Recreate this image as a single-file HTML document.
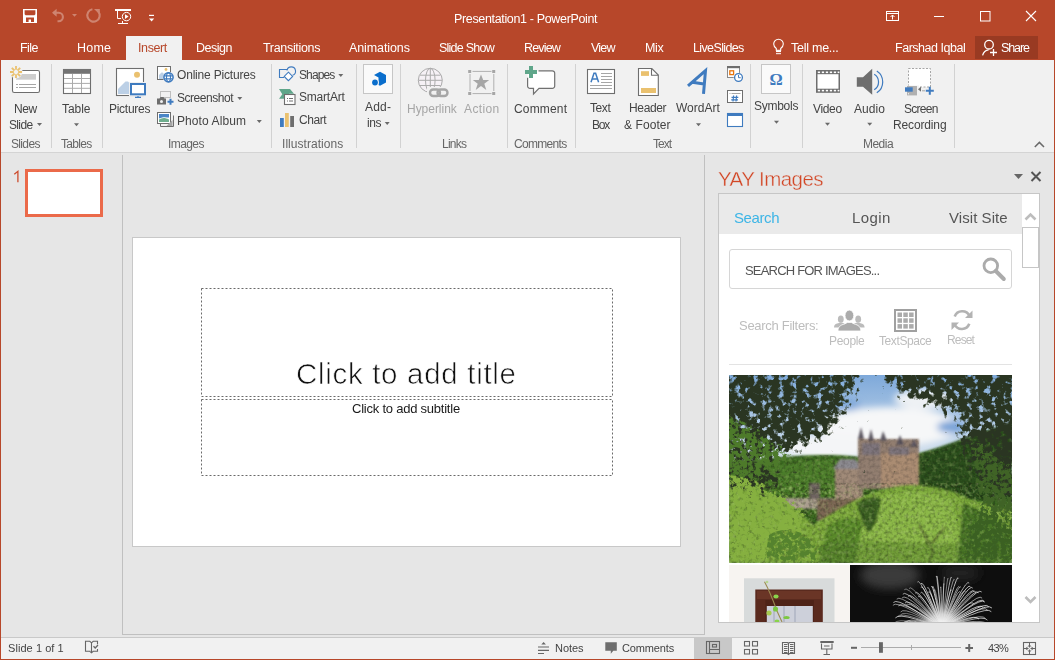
<!DOCTYPE html>
<html><head><meta charset="utf-8">
<style>
html,body{margin:0;padding:0;}
body{width:1055px;height:660px;overflow:hidden;position:relative;background:#E6E6E6;font-family:"Liberation Sans",sans-serif;}
.a{position:absolute;}
.t{position:absolute;white-space:pre;font-family:"Liberation Sans",sans-serif;will-change:transform;}
svg{position:absolute;overflow:visible;}
</style></head><body>
<!-- title + tabs -->
<div class="a" style="left:0;top:0;width:1055px;height:60px;background:#B7472A"></div>
<div class="a" style="left:126px;top:36px;width:56px;height:24px;background:#F1F1F1"></div>
<div class="a" style="left:975px;top:36px;width:63px;height:23px;background:#993A22"></div>
<!-- ribbon -->
<div class="a" style="left:0;top:60px;width:1055px;height:92px;background:#F1F1F1"></div>
<div class="a" style="left:0;top:152px;width:1055px;height:1px;background:#D4D4D4"></div>
<!-- ribbon separators -->
<div class="a" style="left:51px;top:64px;width:1px;height:84px;background:#D2D2D2"></div>
<div class="a" style="left:102px;top:64px;width:1px;height:84px;background:#D2D2D2"></div>
<div class="a" style="left:271px;top:64px;width:1px;height:84px;background:#D2D2D2"></div>
<div class="a" style="left:356px;top:64px;width:1px;height:84px;background:#D2D2D2"></div>
<div class="a" style="left:400px;top:64px;width:1px;height:84px;background:#D2D2D2"></div>
<div class="a" style="left:507px;top:64px;width:1px;height:84px;background:#D2D2D2"></div>
<div class="a" style="left:575px;top:64px;width:1px;height:84px;background:#D2D2D2"></div>
<div class="a" style="left:750px;top:64px;width:1px;height:84px;background:#D2D2D2"></div>
<div class="a" style="left:802px;top:64px;width:1px;height:84px;background:#D2D2D2"></div>
<div class="a" style="left:954px;top:64px;width:1px;height:84px;background:#D2D2D2"></div>
<!-- main area -->
<div class="a" style="left:122px;top:155px;width:1px;height:480px;background:#C0C0C0"></div>
<div class="a" style="left:704px;top:155px;width:1px;height:480px;background:#C0C0C0"></div>
<div class="a" style="left:123px;top:634px;width:581px;height:1px;background:#C0C0C0"></div>
<!-- thumbnail -->
<div class="a" style="left:25px;top:169px;width:72px;height:42px;border:3px solid #EB6A4A;background:#fff"></div>
<!-- slide -->
<div class="a" style="left:132px;top:237px;width:547px;height:308px;border:1px solid #C8C8C8;background:#fff"></div>
<svg class="a" style="left:0;top:0" width="1055" height="660"><g fill="none" stroke="#6A6A6A" stroke-width="1" stroke-dasharray="2 2"><rect x="201.5" y="288.5" width="411" height="108"/><rect x="201.5" y="399.5" width="411" height="76"/></g></svg>

<!-- task pane -->
<div class="a" style="left:718px;top:193px;width:320px;height:428px;border:1px solid #C6C6C6;background:#fff"></div>
<div class="a" style="left:719px;top:194px;width:303px;height:40px;background:#EAEAEA"></div>
<div class="a" style="left:729px;top:249px;width:281px;height:38px;border:1px solid #D6D6D6;border-radius:3px;background:#fff"></div>
<div class="a" style="left:729px;top:364px;width:283px;height:1px;background:#E3E3E3"></div>
<div class="a" style="left:1022px;top:227px;width:15px;height:39px;border:1px solid #C6C6C6;background:#fff"></div>
<!-- images -->
<div class="a" style="left:729px;top:375px;width:283px;height:188px;background:#6a8a40"></div>
<div class="a" style="left:729px;top:565px;width:121px;height:57px;background:#F4F1EC"></div>
<div class="a" style="left:850px;top:565px;width:162px;height:57px;background:#141414"></div>
<!-- status bar -->
<div class="a" style="left:0;top:637px;width:1055px;height:22px;background:#F1F1F1;border-top:1px solid #C9C9C9"></div>
<div class="a" style="left:694px;top:638px;width:38px;height:21px;background:#C8C8C8"></div>
<svg class="a" style="left:0;top:0" width="1055" height="660" viewBox="0 0 1055 660">
<!-- save -->
<path d="M23 9h14v14h-14z M24.6 10.3v4l1 1h8.8l1-1v-4z M26 17.6v4.4h2.6v-2.4h2.4v2.4h3v-4.4z" fill="#fff" fill-rule="evenodd"/>
<!-- undo -->
<g opacity="0.33">
<path d="M53.5 12.8h5.2a4.2 4.2 0 0 1 0 8.4h-1.2" fill="none" stroke="#fff" stroke-width="2.1"/>
<path d="M52 12.8l4.6-4v8z" fill="#fff"/>
<path d="M72 14h5l-2.5 2.8z" fill="#fff"/>
<path d="M92.4 9.3A6.2 6.2 0 1 0 98.4 11.6" fill="none" stroke="#fff" stroke-width="2.1"/>
<path d="M94 9h5.8v5.5z" fill="#fff"/>
</g>
<!-- presenter -->
<g stroke="#fff" fill="none">
<path d="M115 10h16" stroke-width="2"/>
<path d="M117.5 11v7.5h3.5" stroke-width="1"/>
<circle cx="126.5" cy="16.6" r="4.2" stroke-width="1"/>
<path d="M118 23.5h10M122.5 21v2.5" stroke-width="1"/>
</g>
<path d="M125 14.3v4.6l3.6-2.3z" fill="#fff"/>
<!-- customize -->
<path d="M149 15.4h5" stroke="#fff" stroke-width="1.2"/>
<path d="M149 18.6h5.2l-2.6 2.8z" fill="#fff"/>
<!-- window controls -->
<g stroke="#fff" fill="none" stroke-width="1">
<rect x="886.5" y="11.5" width="12" height="9"/>
<path d="M886.5 13.5h12M892.5 19.5v-4.5M890.5 17l2-2l2 2"/>
<path d="M934 16.5h10"/>
<rect x="980.5" y="11.5" width="9.5" height="9.5"/>
<path d="M1026 11l10 10M1036 11l-10 10" stroke-width="1.1"/>
</g>
<!-- bulb -->
<g stroke="#fff" fill="none" stroke-width="1.1">
<path d="M776.3 50.3v-1.8c-1.5-1.2-2.6-2.6-2.6-4.5a4.8 4.8 0 0 1 9.6 0c0 1.9-1.1 3.3-2.6 4.5v1.8z"/>
</g>
<rect x="776" y="50.3" width="5" height="1.8" fill="#fff"/>
<path d="M776 53.7h5" stroke="#fff" stroke-width="1"/>
<!-- share person -->
<g stroke="#fff" fill="none" stroke-width="1.3">
<circle cx="989" cy="44.7" r="4.3"/>
<path d="M982.6 55.3c0.8-3 3-5.3 6-5.5"/>
<path d="M990 52.5h7M993.5 49v7"/>
</g>
</svg>

<svg class="a" style="left:0;top:0" width="1055" height="660" viewBox="0 0 1055 660">
<defs>
<path id="dd" d="M0 0h5l-2.5 3z" fill="#6A6A6A"/>
</defs>
<!-- dropdown arrows -->
<use href="#dd" x="37" y="123"/>
<use href="#dd" x="74" y="123.3"/>
<use href="#dd" x="237.3" y="97"/>
<use href="#dd" x="256.8" y="120"/>
<use href="#dd" x="338.3" y="74"/>
<use href="#dd" x="384.7" y="122"/>
<use href="#dd" x="696" y="123.3"/>
<use href="#dd" x="774" y="120.8"/>
<use href="#dd" x="825" y="122.8"/>
<use href="#dd" x="867.2" y="122.8"/>
<!-- collapse caret -->
<path d="M1034.8 147l4.6-4.6l4.6 4.6" stroke="#6A6A6A" stroke-width="1.5" fill="none"/>

<!-- New Slide -->
<rect x="12.5" y="70.5" width="27" height="22" rx="1.8" fill="#fff" stroke="#6E6E6E" stroke-width="1.1"/>
<rect x="16" y="74" width="20" height="5.7" fill="#CDCDCD"/>
<path d="M16 84.5h2M19 84.5h17M16 87.5h2M19 87.5h17" stroke="#A6A6A6" stroke-width="1"/>
<circle cx="16" cy="72" r="6.5" fill="#F1F1F1"/>
<g stroke="#EAC16F" stroke-width="1.8" stroke-linecap="butt">
<path d="M16 66v3.8M16 74.2v3.8M10 72h3.8M18.2 72h3.8M11.8 67.8l2.7 2.7M17.5 73.5l2.7 2.7M11.8 76.2l2.7-2.7M17.5 70.5l2.7-2.7"/>
</g>

<!-- Table -->
<rect x="63.5" y="69.5" width="27" height="24" fill="#fff" stroke="#6E6E6E" stroke-width="1.1"/>
<rect x="63" y="69" width="28" height="4.8" fill="#737373"/>
<path d="M72.5 74v19M81.5 74v19M64 78.5h26M64 83.4h26M64 88.3h26" stroke="#ABABAB" stroke-width="1"/>

<!-- Pictures -->
<rect x="116.5" y="68.5" width="27" height="27" fill="#fff" stroke="#6E6E6E" stroke-width="1.1"/>
<circle cx="137" cy="74.8" r="3" fill="#EAC16F"/>
<path d="M118 94v-5l7.5-7.5h2.5l2 2v10.5z" fill="#BCD0E6"/>
<rect x="129" y="82" width="18" height="14" fill="#F1F1F1"/>
<rect x="131" y="84" width="14" height="10.3" fill="#fff" stroke="#3F7BBF" stroke-width="2"/>
<path d="M135 97.3h6M138 96v1.3" stroke="#3F7BBF" stroke-width="1.2"/>

<!-- Online Pictures -->
<rect x="157.5" y="66.5" width="13" height="13" fill="#fff" stroke="#6E6E6E" stroke-width="1"/>
<circle cx="166" cy="69.5" r="1.4" fill="#EAC16F"/>
<path d="M159 79v-4l2.5-2.5h1l2 2v4.5z" fill="#BCD0E6"/>
<circle cx="168.5" cy="77.3" r="5.6" fill="#F1F1F1"/>
<circle cx="168.5" cy="77.3" r="4.6" fill="#fff" stroke="#3F7BBF" stroke-width="1.6"/>
<path d="M164.5 75.8h8M164.5 78.8h8" stroke="#3F7BBF" stroke-width="1.2"/>
<ellipse cx="168.5" cy="77.3" rx="2" ry="4.4" fill="none" stroke="#3F7BBF" stroke-width="1.1"/>

<!-- Screenshot -->
<rect x="160.5" y="91.5" width="10" height="6" fill="none" stroke="#8A8A8A" stroke-width="1" stroke-dasharray="1 1"/>
<path d="M157 98.5h2.5l1-1.5h3l1 1.5h1.5v6h-9z" fill="#6E6E6E"/>
<circle cx="161.5" cy="101.5" r="1.5" fill="#F1F1F1"/>
<path d="M167.5 101.8h6M170.5 98.8v6" stroke="#3F7BBF" stroke-width="2"/>

<!-- Photo Album -->
<path d="M160.5 115.5v11h13v-11" fill="none" stroke="#6E6E6E" stroke-width="1"/>
<rect x="157.5" y="112.5" width="13" height="11" fill="#fff" stroke="#6E6E6E" stroke-width="1"/>
<path d="M159 114h10v3.5c-3 0 -5 -1 -10 1z" fill="#4B86C6"/>
<path d="M159 122v-2.5c3-2 6-2 10 0v2.5z" fill="#6FAE8E"/>
<path d="M166.5 126l6-6v6z" fill="#A6A6A6"/>

<!-- Shapes -->
<path d="M284 77.5h-4.5v-8h8" fill="none" stroke="#3F7BBF" stroke-width="1.1"/>
<path d="M287 70.5a4.3 4.3 0 1 1 5.6 4.8" fill="none" stroke="#3F7BBF" stroke-width="1.1"/>
<path d="M288.4 72.2l4.2 4.2l-4.2 4.2l-4.2-4.2z" fill="#fff" stroke="#3F7BBF" stroke-width="1.1"/>

<!-- SmartArt -->
<path d="M279 89h11l4 4.8h-5v5h-10l3.3-4.5z" fill="#5FA68A"/>
<rect x="284.5" y="94.5" width="10.5" height="10" fill="#fff" stroke="#6E6E6E" stroke-width="1.1"/>
<path d="M287 98.5h1M289 98.5h4M287 101h1M289 101h4" stroke="#6E6E6E" stroke-width="1"/>

<!-- Chart -->
<rect x="280" y="118" width="3.8" height="9" fill="#3F7BBF"/>
<rect x="285" y="113" width="3.8" height="14" fill="#EAC16F"/>
<rect x="290.2" y="116" width="3.8" height="11" fill="#6E6E6E"/>

<!-- Add-ins -->
<rect x="363.5" y="64.5" width="29" height="29" fill="#FAFAFA" stroke="#C6C6C6" stroke-width="1"/>
<path d="M374 75l6-3.3l6 3.3v7.5l-6 3.3l-1.5-0.8v-7.5l-4.5-2.4z" fill="#0A6ECC"/>
<circle cx="375" cy="82.5" r="3.8" fill="#FAFAFA"/>
<circle cx="375" cy="82.5" r="2.9" fill="#0A6ECC"/>

<!-- Hyperlink -->
<circle cx="430.3" cy="80.3" r="12" fill="#F6F1F6" stroke="#ABABAB" stroke-width="1"/>
<ellipse cx="430.3" cy="80.3" rx="4.8" ry="12" fill="none" stroke="#ABABAB" stroke-width="1"/>
<path d="M418.5 80.3h23.6M420 75.2h20.6M420 85.5h20.6M430.3 68.3v24" stroke="#ABABAB" stroke-width="1"/>
<rect x="427" y="87" width="24" height="12" fill="#F1F1F1"/>
<rect x="430" y="89.5" width="10" height="6.5" rx="3.2" fill="none" stroke="#A6A6A6" stroke-width="2.4"/>
<rect x="437.5" y="89.5" width="10" height="6.5" rx="3.2" fill="none" stroke="#A6A6A6" stroke-width="2.4"/>

<!-- Action -->
<path d="M470 74v17M493.8 74v17M472.5 71.4h19M472.5 93.6h19" stroke="#B0B0B0" stroke-width="1"/>
<rect x="468.2" y="70" width="3" height="3" fill="#A6A6A6"/>
<rect x="492.2" y="70" width="3" height="3" fill="#A6A6A6"/>
<rect x="468.2" y="92" width="3" height="3" fill="#A6A6A6"/>
<rect x="492.2" y="92" width="3" height="3" fill="#A6A6A6"/>
<path d="M481 74.5l2.2 5.6h6l-4.9 3.6l2 6.2l-5.3-3.8l-5.3 3.8l2-6.2l-4.9-3.6h6z" fill="#A6A6A6"/>

<!-- Comment -->
<path d="M530.5 70.8h21.8a2.4 2.4 0 0 1 2.4 2.4v12.8a2.4 2.4 0 0 1 -2.4 2.4h-13.3l-5.5 5.6v-5.6h-3.5a2.4 2.4 0 0 1 -2.4 -2.4v-12.8a2.4 2.4 0 0 1 2.4 -2.4z" fill="#fff"/>
<path d="M538.5 70.8h13.8a2.4 2.4 0 0 1 2.4 2.4v12.8a2.4 2.4 0 0 1 -2.4 2.4h-13.3l-5.5 5.6v-5.6h-3.5a2.4 2.4 0 0 1 -2.4 -2.4v-8.2" fill="none" stroke="#707070" stroke-width="1.2"/>
<path d="M525 72h12M531 66v12" stroke="#5FA68A" stroke-width="4"/>
<!-- Text Box -->
<rect x="587.5" y="69.5" width="27" height="24" fill="#fff" stroke="#6E6E6E" stroke-width="1.1"/>
<path d="M591 82.2l3-9h1.6l3 9M592.2 79h5.4" fill="none" stroke="#3F7BBF" stroke-width="1.5"/>
<path d="M601 73.5h11M601 76.5h11M601 79.5h11M601 82.5h11M590 85.5h22M590 88.5h22" stroke="#A6A6A6" stroke-width="1"/>

<!-- Header & Footer -->
<path d="M638.5 68.5h13.3l6.5 6.5v20.5h-19.8z" fill="#fff" stroke="#6E6E6E" stroke-width="1.1"/>
<path d="M651.5 68.5v6.8h6.8" fill="none" stroke="#6E6E6E" stroke-width="1.1"/>
<rect x="641" y="71.2" width="8" height="4.7" fill="#EAC16F"/>
<rect x="641" y="88" width="15" height="5" fill="#EAC16F"/>

<!-- WordArt -->
<path d="M688 85.8l17.5-15.3l-2 23.3M692.3 82.3l11.7 1.8" fill="none" stroke="#3F7BBF" stroke-width="3"/>

<!-- Date & time -->
<rect x="727.5" y="67.5" width="12" height="10" fill="#fff" stroke="#8A8A8A" stroke-width="1"/>
<rect x="727" y="66" width="13" height="2.2" fill="#6E6E6E"/>
<rect x="729.8" y="70.8" width="3.8" height="3.8" fill="none" stroke="#E8740C" stroke-width="1.3"/>
<circle cx="738.5" cy="77.5" r="4.8" fill="#F1F1F1"/>
<circle cx="738.5" cy="77.5" r="3.9" fill="#fff" stroke="#3F7BBF" stroke-width="1.3"/>
<path d="M738.5 75v2.7h2.2" fill="none" stroke="#3F7BBF" stroke-width="1"/>
<!-- slide number -->
<rect x="727.5" y="90.5" width="15" height="12" fill="#fff" stroke="#6E6E6E" stroke-width="1"/>
<path d="M729.5 93.5h1M731.5 93.5h9" stroke="#A6A6A6" stroke-width="1"/>
<path d="M733.6 95.5l-0.6 6M736.6 95.5l-0.6 6M731.5 97.3h6.8M731.2 99.8h6.8" stroke="#3F7BBF" stroke-width="1.2"/>
<!-- object -->
<rect x="727.5" y="113.5" width="15" height="13" fill="#fff" stroke="#3F7BBF" stroke-width="1.1"/>
<rect x="727" y="113" width="16" height="3" fill="#3F7BBF"/>

<!-- Symbols -->
<rect x="761.5" y="64.5" width="29" height="29" fill="#FAFAFA" stroke="#C6C6C6" stroke-width="1"/>
<text x="776.2" y="85" text-anchor="middle" font-family="Liberation Serif" font-weight="bold" font-size="16.5" fill="#3F7BBF">Ω</text>

<!-- Video -->
<rect x="816" y="70" width="24" height="22.8" fill="#6E6E6E"/>
<rect x="817.5" y="74.2" width="21" height="14.5" fill="#fff"/>
<g fill="#fff">
<rect x="817.8" y="71.5" width="2.3" height="1.6"/><rect x="821.8" y="71.5" width="2.3" height="1.6"/><rect x="825.8" y="71.5" width="2.3" height="1.6"/><rect x="829.8" y="71.5" width="2.3" height="1.6"/><rect x="833.8" y="71.5" width="2.3" height="1.6"/><rect x="837.6" y="71.5" width="1.8" height="1.6"/>
<rect x="817.8" y="89.8" width="2.3" height="1.6"/><rect x="821.8" y="89.8" width="2.3" height="1.6"/><rect x="825.8" y="89.8" width="2.3" height="1.6"/><rect x="829.8" y="89.8" width="2.3" height="1.6"/><rect x="833.8" y="89.8" width="2.3" height="1.6"/><rect x="837.6" y="89.8" width="1.8" height="1.6"/>
</g>

<!-- Audio -->
<path d="M856.8 77.2h6.2l9.2-8.4v26l-9.2-8.1h-6.2z" fill="#6E6E6E"/>
<path d="M874.2 74.3a9 9 0 0 1 0 15.4M876.8 71a13 13 0 0 1 0 21.8" fill="none" stroke="#3F7BBF" stroke-width="1.2"/>

<!-- Screen Recording -->
<rect x="908.5" y="68.5" width="22" height="18.5" fill="#fff" stroke="#A6A6A6" stroke-width="1" stroke-dasharray="2 1.5"/>
<rect x="904" y="85.5" width="15" height="11" fill="#F1F1F1"/>
<rect x="907" y="86" width="10" height="9.4" fill="#B0B0B0"/>
<rect x="905" y="87.3" width="7.7" height="4.4" fill="#3F7BBF"/>
<rect x="908" y="93.3" width="1" height="1" fill="#fff"/>
<path d="M918 89.3l3-2.5v5z" fill="#6E6E6E"/>
<path d="M922 90.8h3" stroke="#A6A6A6" stroke-width="1"/>
<path d="M925.8 90.8h8M929.8 86.8v8" stroke="#3F7BBF" stroke-width="2"/>
</svg>

<svg class="a" style="left:0;top:0" width="1055" height="660" viewBox="0 0 1055 660">
<!-- thumbnum -->
<path d="M14.3 174.3l3.6-3v11" fill="none" stroke="#CD4B2C" stroke-width="1.3"/>
<!-- pane header -->
<path d="M1014 174h9l-4.5 5z" fill="#666"/>
<path d="M1031.5 172l9 9M1040.5 172l-9 9" stroke="#555" stroke-width="2"/>
<!-- scroll chevrons -->
<path d="M1025.5 219.5l5-5l5 5" fill="none" stroke="#BDBDBD" stroke-width="2.6"/>
<path d="M1025.5 597l5 5l5-5" fill="none" stroke="#BDBDBD" stroke-width="2.6"/>
<!-- magnifier -->
<circle cx="990.8" cy="265.8" r="6.8" fill="none" stroke="#ABABAB" stroke-width="2.8"/>
<path d="M995.8 271l8 8" stroke="#ABABAB" stroke-width="4" stroke-linecap="round"/>
<!-- people -->
<g fill="#BBBBBB">
<ellipse cx="840.8" cy="319.2" rx="2.9" ry="3.6"/>
<path d="M834 327.5c0-2.6 1.5-3.8 4-4.3l2.8-0.8l3.5 0.8v4.3z"/>
<ellipse cx="858.2" cy="319.2" rx="2.9" ry="3.6"/>
<path d="M864.6 327.5c0-2.6-1.5-3.8-4-4.3l-2.8-0.8l-3.5 0.8v4.3z"/>
</g>
<g fill="#ABABAB" stroke="#fff" stroke-width="0.8">
<ellipse cx="849.4" cy="315.5" rx="4.4" ry="5.4"/>
<path d="M838 331c0-4.2 2.5-6 6.5-7l3-1.6h3.8l3 1.6c4 1 6.5 2.8 6.5 7z"/>
</g>
<!-- textspace -->
<rect x="895" y="310" width="21" height="21" fill="#fff" stroke="#A0A0A0" stroke-width="2"/>
<g fill="#ABABAB">
<rect x="897.5" y="312.5" width="4.5" height="4.5"/><rect x="903.3" y="312.5" width="4.5" height="4.5"/><rect x="909.1" y="312.5" width="4.5" height="4.5"/>
<rect x="897.5" y="318.3" width="4.5" height="4.5"/><rect x="903.3" y="318.3" width="4.5" height="4.5"/><rect x="909.1" y="318.3" width="4.5" height="4.5"/>
<rect x="897.5" y="324.1" width="4.5" height="4.5"/><rect x="903.3" y="324.1" width="4.5" height="4.5"/><rect x="909.1" y="324.1" width="4.5" height="4.5"/>
</g>
<!-- reset -->
<g fill="none" stroke="#B3B3B3" stroke-width="2.6">
<path d="M969.5 316a8 8 0 0 0 -14.8 0.5"/>
<path d="M954.5 324.3a8 8 0 0 0 14.8 -0.5"/>
</g>
<path d="M972.5 310.5v7.5h-7.5z" fill="#B3B3B3"/>
<path d="M951.5 330v-7.5h7.5z" fill="#B3B3B3"/>
</svg>

<svg class="a" style="left:0;top:0" width="1055" height="660" viewBox="0 0 1055 660">
<g fill="none" stroke="#666" stroke-width="1.1">
<!-- spelling -->
<path d="M90.5 651.3h-5v-10h4.3l1.7 1.5l1.7-1.5h4.3v3M97.5 649v2.3h-4.3l-1.7 1.5l-1.7-1.5M91.5 643v10"/>
<path d="M93.5 646.3l1.7 1.7l2.8-3" stroke-width="1.3"/>
<!-- notes -->
<path d="M538 647h11M538 650.4h11M538 653.5h6"/>
<!-- normal -->
<rect x="706.5" y="641.5" width="13" height="12"/>
<path d="M709.5 642v11M710 649.5h9.5"/>
<rect x="712.5" y="644.5" width="4" height="2.5"/>
<!-- sorter -->
<rect x="744.5" y="641.5" width="5" height="4.5"/><rect x="752.5" y="641.5" width="5" height="4.5"/>
<rect x="744.5" y="649.5" width="5" height="4.5"/><rect x="752.5" y="649.5" width="5" height="4.5"/>
<!-- reading -->
<path d="M782.5 642.5h5l1 1l1-1h5v11h-5l-1 1l-1-1h-5z"/>
<path d="M788.5 643.5v11.5M784 644.5h3.5M784 646.5h3.5M784 648.5h3.5M784 650.5h3.5M784 652.5h3.5M790 644.5h3.5M790 646.5h3.5M790 648.5h3.5M790 650.5h3.5M790 652.5h3.5" stroke-width="1"/>
<!-- slideshow -->
<path d="M821.5 643.5v5.5h10.5v-5.5M826.8 649v5M823.5 654.5h6.5M824 646h5.5"/>
<!-- fit -->
<rect x="1023.5" y="642.5" width="12" height="12"/>
<path d="M1029.5 643v4.5M1029.5 649.5v4.5M1024 648.5h4.5M1030.5 648.5h4.5" stroke-width="1"/>
</g><g fill="#666"><path d="M1027.6 646.6h3.8l-1.9-2.2z"/><path d="M1027.6 650.4h3.8l-1.9 2.2z"/><path d="M1027.4 646.6v3.8l-2.2-1.9z"/><path d="M1031.6 646.6v3.8l2.2-1.9z"/></g><g>
</g>
<path d="M541.3 644.5l2.3-2.4l2.3 2.4z" fill="#666"/>
<path d="M820.3 641h13.4v2h-13.4z" fill="#666"/>
<path d="M605.3 642.3h11.5v8.5h-3.5l-2.5 3v-3h-5.5z" fill="#6E6E6E"/>
<!-- zoom -->
<path d="M851 647.8h6" stroke="#666" stroke-width="2"/>
<path d="M861 647.5h100" stroke="#ABABAB" stroke-width="1"/>
<path d="M911.5 645v5" stroke="#ABABAB" stroke-width="1"/>
<rect x="879" y="642.2" width="3.9" height="10.6" fill="#666"/>
<path d="M965.4 648h7.6M969.2 644v8" stroke="#666" stroke-width="2"/>
</svg>

<svg class="a" style="left:729px;top:375px;overflow:hidden" width="283" height="188" viewBox="0 0 283 188">
<defs>
<filter id="b1" x="-5%" y="-5%" width="110%" height="110%"><feGaussianBlur stdDeviation="1.2"/></filter>
<filter id="b3" x="-20%" y="-20%" width="140%" height="140%"><feGaussianBlur stdDeviation="3.5"/></filter>
<filter id="leafyL" x="-10%" y="-10%" width="120%" height="120%">
<feGaussianBlur in="SourceAlpha" stdDeviation="7" result="ba"/>
<feTurbulence type="fractalNoise" baseFrequency="0.16" numOctaves="3" seed="4" result="n"/>
<feComposite in="ba" in2="n" operator="arithmetic" k1="0" k2="0.52" k3="1" k4="-0.8" result="m"/>
<feColorMatrix in="m" type="matrix" values="0 0 0 0 0  0 0 0 0 0  0 0 0 0 0  0 0 0 6 0" result="mask"/>
<feGaussianBlur in="mask" stdDeviation="0.5" result="mask2"/>
<feFlood flood-color="#2A3622"/>
<feComposite in2="mask2" operator="in"/>
</filter>
<filter id="leafyG" x="-10%" y="-10%" width="120%" height="120%">
<feGaussianBlur in="SourceAlpha" stdDeviation="5" result="ba"/>
<feTurbulence type="fractalNoise" baseFrequency="0.22" numOctaves="3" seed="9" result="n"/>
<feComposite in="ba" in2="n" operator="arithmetic" k1="0" k2="0.5" k3="1" k4="-0.85" result="m"/>
<feColorMatrix in="m" type="matrix" values="0 0 0 0 0  0 0 0 0 0  0 0 0 0 0  0 0 0 6 0" result="mask"/>
<feGaussianBlur in="mask" stdDeviation="0.5" result="mask2"/>
<feComposite in="SourceGraphic" in2="mask2" operator="in"/>
</filter>
<filter id="tex" x="0" y="0" width="100%" height="100%">
<feTurbulence type="fractalNoise" baseFrequency="0.3" numOctaves="2" seed="7" result="n"/>
<feColorMatrix in="n" type="matrix" values="0 0 0 0 0  0 0 0 0 0  0 0 0 0 0  0 0 0 2.2 -0.9" result="a"/>
<feComposite in="SourceGraphic" in2="a" operator="in"/>
</filter>
<filter id="tex2" x="0" y="0" width="100%" height="100%">
<feTurbulence type="fractalNoise" baseFrequency="0.25" numOctaves="2" seed="11" result="n"/>
<feColorMatrix in="n" type="matrix" values="0 0 0 0 0  0 0 0 0 0  0 0 0 0 0  0 0 0 2.4 -1.1" result="a"/>
<feComposite in="SourceGraphic" in2="a" operator="in"/>
</filter>
<linearGradient id="skyg" x1="0" y1="0" x2="0" y2="1"><stop offset="0" stop-color="#7EA9DA"/><stop offset="0.45" stop-color="#D6E2EE"/><stop offset="1" stop-color="#F2F4F6"/></linearGradient>
<clipPath id="veg2"><path d="M0 88C60 80 100 78 130 82L190 78C215 72 240 60 283 48V188H0z"/></clipPath>
</defs>
<!-- sky -->
<rect width="283" height="188" fill="url(#skyg)"/>
<g filter="url(#b3)">
<ellipse cx="160" cy="52" rx="70" ry="20" fill="#F6F7F8"/>
<ellipse cx="100" cy="72" rx="45" ry="12" fill="#F4F5F7"/>
<ellipse cx="195" cy="24" rx="30" ry="10" fill="#EEF1F4"/>
<ellipse cx="118" cy="30" rx="14" ry="6" fill="#7FA8DA"/>
<ellipse cx="222" cy="52" rx="14" ry="6" fill="#6F9ED6"/>
</g>
<!-- far forest -->
<g filter="url(#b1)">
<path d="M0 88C60 80 100 78 130 82L190 78C215 72 240 60 283 48V188H0z" fill="#3D6A24"/>
<path d="M30 96C60 86 100 82 128 86V122H30z" fill="#4B7C2A"/>
<path d="M190 80C215 72 240 60 283 50V125H190z" fill="#2C4E1C"/>
</g>
<g clip-path="url(#veg2)">
<rect width="283" height="188" fill="#1A2410" filter="url(#tex)" opacity="0.45"/>
<rect width="283" height="188" fill="#B8D080" filter="url(#tex2)" opacity="0.3"/>
</g>
<!-- castle -->
<g filter="url(#b1)">
<path d="M47 123H105V134H47z" fill="#A99C8E"/>
<path d="M80 108H91V124H80z" fill="#6E6460"/>
<path d="M106 92H134V124H106z" fill="#A08A78"/>
<path d="M104 94L111 84H126L134 94z" fill="#8C8A90"/>
<path d="M129 64H190V114H129z" fill="#927E70"/>
<path d="M152 78H190V112H152z" fill="#AA8C72"/>
<path d="M129 64L132 52L135 64zM139 66L142 54L145 66zM151 66L154 56L158 66zM167 70L171 60L175 70zM181 72L185 64L189 72z" fill="#5C5660"/>
<path d="M133 68H151V80H133zM160 72H180V80H160z" fill="#7E757C"/>
<path d="M88 124H134V146H88z" fill="#7A6552"/>
</g>
<!-- hill -->
<g filter="url(#b1)">
<path d="M0 112C30 110 58 124 84 150L100 140C122 126 150 112 180 110C202 110 222 114 240 124L283 136V188H0z" fill="#7CA83B"/>
<path d="M138 126C165 114 195 114 222 124L238 188H120z" fill="#8BB746"/>
<path d="M0 118C22 116 46 126 70 150L86 188H0z" fill="#80AC3C"/>
<path d="M128 128C136 122 148 120 152 124C150 140 146 152 140 158C134 150 130 140 128 128z" fill="#3A5E22"/>
<path d="M98 152C112 142 124 140 134 148L126 188H90z" fill="#5A8A2C"/>
<path d="M234 128C252 134 270 148 283 158V188H228z" fill="#4A7528"/>
<path d="M190 150L204 176L200 188M203 168L216 152" stroke="#4A4A2A" stroke-width="1.6" fill="none"/>
<path d="M90 170C130 160 200 172 283 168V188H90z" fill="#4A7426" opacity="0.4"/>
</g>
<rect y="108" width="283" height="80" fill="#1A2410" filter="url(#tex)" opacity="0.4"/>
<rect y="108" width="283" height="80" fill="#C8E090" filter="url(#tex2)" opacity="0.3"/>
<rect x="45" y="50" width="150" height="60" fill="#3A3430" filter="url(#tex)" opacity="0.3" clip-path="url(#castc)"/>
<clipPath id="castc"><path d="M47 123H105V134H47zM80 108H91V124H80zM104 84H134V124H104zM129 64H190V114H129zM88 124H134V146H88z"/></clipPath>
<!-- canopies -->
<g filter="url(#leafyL)">
<path d="M-20 -20H132C130 20 116 44 100 58C84 70 64 78 44 84C26 90 10 98 -20 112z"/>
<path d="M142 -20H300V134C274 128 252 112 242 96C234 80 230 62 228 42C214 34 196 30 176 22C160 16 150 8 142 -20z"/>
<path d="M0 70C20 90 50 100 62 104L40 118L0 120z"/>
</g>
<g filter="url(#leafyG)">
<path d="M-20 30C10 40 40 60 64 80C50 100 30 110 -20 116z" fill="#4E7A2C"/>
<path d="M240 60C260 70 275 90 300 100V140H250z" fill="#3F6426"/>
<path d="M0 100C30 104 60 116 80 140L70 188H0z" fill="#86B040"/>
<path d="M40 160C55 150 75 155 95 172L90 188H35z" fill="#55822E"/>
<path d="M240 140C260 130 283 140 300 150V188H230z" fill="#3A6024"/>
</g>
</svg>
<svg class="a" style="left:729px;top:565px;overflow:hidden" width="121" height="57" viewBox="0 0 121 57">
<rect width="121" height="57" fill="#F7F4F1"/>
<rect x="15" y="13.3" width="90.5" height="44" fill="#D8DBDB"/>
<rect x="26.3" y="24.5" width="67.5" height="33" fill="#5A2A1E"/>
<rect x="28" y="26" width="64" height="8" fill="#6A3526"/>
<rect x="36.4" y="35" width="48.5" height="22" fill="#4E2318"/>
<rect x="37.8" y="41" width="46" height="16" fill="#CDD0DA"/>
<path d="M45 41v16M55 41v16M66 41v16" stroke="#A8AEBE" stroke-width="2" opacity="0.6"/>
<path d="M35.5 16.8C40 25 44 35 48 46L53 57" stroke="#9A8A50" stroke-width="1.1" fill="none"/>
<ellipse cx="47" cy="31.5" rx="2.6" ry="2" fill="#8AD44A"/>
<ellipse cx="46.5" cy="44" rx="2.5" ry="2.6" fill="#7CC840"/>
<ellipse cx="40" cy="48" rx="2.6" ry="2.5" fill="#A8CC50"/>
<ellipse cx="57.5" cy="52.5" rx="3.2" ry="1.6" fill="#7CC840"/>
<ellipse cx="48" cy="56" rx="2.5" ry="1.5" fill="#8AD44A"/>
<ellipse cx="38" cy="17" rx="1.4" ry="1.2" fill="#B8D890"/>
</svg>
<svg class="a" style="left:850px;top:565px;overflow:hidden" width="162" height="57" viewBox="0 0 162 57">
<defs>
<filter id="fb" x="-50%" y="-50%" width="200%" height="200%"><feGaussianBlur stdDeviation="5"/></filter>
<filter id="fb1" x="-10%" y="-10%" width="120%" height="120%"><feGaussianBlur stdDeviation="0.45"/></filter>
<radialGradient id="core" cx="0.5" cy="0.5" r="0.5"><stop offset="0" stop-color="#fff"/><stop offset="0.5" stop-color="#ddd" stop-opacity="0.8"/><stop offset="1" stop-color="#999" stop-opacity="0"/></radialGradient>
</defs>
<rect width="162" height="57" fill="#0E0E0E"/>
<ellipse cx="40" cy="10" rx="30" ry="14" fill="#3A3A3A" filter="url(#fb)"/>
<ellipse cx="110" cy="8" rx="20" ry="8" fill="#222" filter="url(#fb)"/>
<g stroke="#F2F2F2" stroke-width="0.8" fill="none" filter="url(#fb1)">
<path d="M92 62L65.9 60.9Q48.6 60.2 45.6 64.2" stroke-opacity="0.91"/>
<path d="M92 62L66.1 59.3Q48.8 57.6 45.8 61.6" stroke-opacity="0.97"/>
<path d="M92 62L68.2 59.6Q52.3 58.0 49.3 62.0" stroke-opacity="0.97"/>
<path d="M92 62L65.1 57.2Q47.2 54.0 44.3 58.0" stroke-opacity="0.60"/>
<path d="M92 62L70.2 57.3Q55.7 54.2 52.7 58.2" stroke-opacity="0.79"/>
<path d="M92 62L72.2 56.7Q59.0 53.2 56.1 57.2" stroke-opacity="0.65"/>
<path d="M92 62L65.7 54.1Q48.2 48.9 45.4 52.9" stroke-opacity="0.89"/>
<path d="M92 62L66.9 53.4Q50.2 47.7 47.4 51.7" stroke-opacity="0.61"/>
<path d="M92 62L68.8 52.3Q53.4 45.8 50.6 49.8" stroke-opacity="0.55"/>
<path d="M92 62L68.7 50.6Q53.2 43.0 50.6 47.0" stroke-opacity="0.65"/>
<path d="M92 62L64.1 46.6Q45.5 36.3 42.9 40.3" stroke-opacity="0.68"/>
<path d="M92 62L67.4 46.9Q51.0 36.9 48.4 40.9" stroke-opacity="0.86"/>
<path d="M92 62L64.4 44.9Q46.0 33.5 43.4 37.5" stroke-opacity="0.86"/>
<path d="M92 62L66.3 42.9Q49.1 30.2 46.7 34.2" stroke-opacity="0.68"/>
<path d="M92 62L71.7 46.6Q58.2 36.3 55.8 40.3" stroke-opacity="0.62"/>
<path d="M92 62L71.2 45.2Q57.4 34.0 55.0 38.0" stroke-opacity="0.82"/>
<path d="M92 62L69.4 42.1Q54.3 28.9 52.1 32.9" stroke-opacity="0.70"/>
<path d="M92 62L69.7 39.9Q54.9 25.2 52.8 29.2" stroke-opacity="0.77"/>
<path d="M92 62L72.8 41.2Q60.0 27.3 58.0 31.3" stroke-opacity="0.87"/>
<path d="M92 62L70.6 37.2Q56.3 20.7 54.3 24.7" stroke-opacity="0.56"/>
<path d="M92 62L73.3 36.5Q60.9 19.5 59.1 23.5" stroke-opacity="0.56"/>
<path d="M92 62L76.9 39.3Q66.8 24.1 65.2 28.1" stroke-opacity="0.81"/>
<path d="M92 62L78.6 41.6Q69.6 28.0 68.0 32.0" stroke-opacity="0.63"/>
<path d="M92 62L79.9 39.2Q71.9 24.1 70.5 28.1" stroke-opacity="0.89"/>
<path d="M92 62L78.0 32.7Q68.7 13.1 67.4 17.1" stroke-opacity="0.70"/>
<path d="M92 62L80.0 35.9Q72.0 18.5 70.8 22.5" stroke-opacity="0.90"/>
<path d="M92 62L80.1 33.7Q72.1 14.8 70.9 18.8" stroke-opacity="0.91"/>
<path d="M92 62L84.5 38.9Q79.4 23.4 78.5 27.4" stroke-opacity="0.98"/>
<path d="M92 62L83.7 36.2Q78.2 19.0 77.3 23.0" stroke-opacity="0.82"/>
<path d="M92 62L86.0 35.6Q82.0 18.0 81.4 22.0" stroke-opacity="0.97"/>
<path d="M92 62L86.7 35.7Q83.2 18.2 82.6 22.2" stroke-opacity="0.69"/>
<path d="M92 62L87.8 37.7Q84.9 21.4 84.4 25.4" stroke-opacity="0.62"/>
<path d="M92 62L88.7 29.2Q86.4 7.3 86.1 11.3" stroke-opacity="0.62"/>
<path d="M92 62L89.0 29.3Q87.1 7.4 86.8 11.4" stroke-opacity="0.79"/>
<path d="M92 62L91.3 35.9Q90.8 18.5 90.7 22.5" stroke-opacity="0.82"/>
<path d="M92 62L93.1 33.9Q93.8 15.2 94.0 19.2" stroke-opacity="0.74"/>
<path d="M92 62L93.4 29.8Q94.3 8.3 94.5 12.3" stroke-opacity="0.56"/>
<path d="M92 62L95.5 30.6Q97.8 9.7 98.2 13.7" stroke-opacity="0.61"/>
<path d="M92 62L97.4 29.9Q101.1 8.5 101.6 12.5" stroke-opacity="0.83"/>
<path d="M92 62L97.3 37.6Q100.9 21.4 101.5 25.4" stroke-opacity="0.75"/>
<path d="M92 62L99.1 31.2Q103.8 10.7 104.5 14.7" stroke-opacity="0.68"/>
<path d="M92 62L101.3 30.4Q107.6 9.3 108.4 13.3" stroke-opacity="0.93"/>
<path d="M92 62L101.9 35.7Q108.4 18.2 109.5 22.2" stroke-opacity="0.77"/>
<path d="M92 62L102.8 35.8Q110.0 18.4 111.1 22.4" stroke-opacity="0.68"/>
<path d="M92 62L102.3 38.9Q109.1 23.4 110.3 27.4" stroke-opacity="0.72"/>
<path d="M92 62L107.4 33.2Q117.7 14.1 119.2 18.1" stroke-opacity="0.83"/>
<path d="M92 62L105.2 38.4Q114.1 22.7 115.6 26.7" stroke-opacity="0.59"/>
<path d="M92 62L108.1 35.5Q118.8 17.8 120.4 21.8" stroke-opacity="0.94"/>
<path d="M92 62L109.4 36.2Q121.0 19.1 122.7 23.1" stroke-opacity="0.90"/>
<path d="M92 62L110.3 38.2Q122.5 22.4 124.3 26.4" stroke-opacity="0.89"/>
<path d="M92 62L111.1 38.5Q123.9 22.8 125.8 26.8" stroke-opacity="0.68"/>
<path d="M92 62L112.7 39.0Q126.5 23.7 128.5 27.7" stroke-opacity="0.86"/>
<path d="M92 62L114.6 38.6Q129.7 23.0 131.7 27.0" stroke-opacity="0.84"/>
<path d="M92 62L109.8 45.7Q121.6 34.8 123.8 38.8" stroke-opacity="0.80"/>
<path d="M92 62L114.7 42.3Q129.8 29.1 132.1 33.1" stroke-opacity="0.76"/>
<path d="M92 62L115.9 44.1Q131.8 32.2 134.2 36.2" stroke-opacity="0.91"/>
<path d="M92 62L116.2 44.6Q132.4 33.1 134.8 37.1" stroke-opacity="0.88"/>
<path d="M92 62L115.1 47.8Q130.5 38.3 133.1 42.3" stroke-opacity="0.93"/>
<path d="M92 62L118.4 47.4Q136.0 37.6 138.7 41.6" stroke-opacity="0.99"/>
<path d="M92 62L117.7 49.4Q134.9 41.0 137.6 45.0" stroke-opacity="0.79"/>
<path d="M92 62L120.3 48.2Q139.2 39.0 141.9 43.0" stroke-opacity="0.97"/>
<path d="M92 62L119.9 50.4Q138.5 42.7 141.3 46.7" stroke-opacity="0.87"/>
<path d="M92 62L112.5 54.9Q126.2 50.1 129.0 54.1" stroke-opacity="0.90"/>
<path d="M92 62L116.4 54.5Q132.6 49.5 135.5 53.5" stroke-opacity="0.74"/>
<path d="M92 62L117.5 55.5Q134.5 51.1 137.4 55.1" stroke-opacity="0.84"/>
<path d="M92 62L112.2 57.9Q125.7 55.1 128.6 59.1" stroke-opacity="0.62"/>
<path d="M92 62L117.0 57.7Q133.7 54.8 136.6 58.8" stroke-opacity="0.65"/>
<path d="M92 62L117.1 59.1Q133.8 57.2 136.8 61.2" stroke-opacity="0.57"/>
<path d="M92 62L114.1 60.2Q128.8 59.0 131.8 63.0" stroke-opacity="0.57"/>
<path d="M92 62L114.8 60.8Q130.0 59.9 133.0 63.9" stroke-opacity="0.63"/>
</g>
<ellipse cx="92" cy="62" rx="30" ry="26" fill="url(#core)"/>
</svg>

<!-- window border -->
<div class="a" style="left:0;top:0;width:1px;height:660px;background:#B7472A"></div>
<div class="a" style="left:1054px;top:0;width:1px;height:660px;background:#B7472A"></div>
<div class="a" style="left:0;top:659px;width:1055px;height:1px;background:#B7472A"></div>
<div class="t" style="left:453.50px;top:13.38px;font-size:12.5px;line-height:12.5px;letter-spacing:-0.344px;color:#fff;">Presentation1 - PowerPoint</div>
<div class="t" style="left:20.30px;top:42.38px;font-size:12.5px;line-height:12.5px;letter-spacing:-0.530px;color:#fff;">File</div>
<div class="t" style="left:76.50px;top:42.38px;font-size:12.5px;line-height:12.5px;letter-spacing:0.203px;color:#fff;">Home</div>
<div class="t" style="left:138.00px;top:42.38px;font-size:12.5px;line-height:12.5px;letter-spacing:-0.398px;color:#B7472A;">Insert</div>
<div class="t" style="left:196.00px;top:42.38px;font-size:12.5px;line-height:12.5px;letter-spacing:-0.472px;color:#fff;">Design</div>
<div class="t" style="left:262.60px;top:42.38px;font-size:12.5px;line-height:12.5px;letter-spacing:-0.322px;color:#fff;">Transitions</div>
<div class="t" style="left:349.00px;top:42.38px;font-size:12.5px;line-height:12.5px;letter-spacing:-0.098px;color:#fff;">Animations</div>
<div class="t" style="left:439.00px;top:42.38px;font-size:12.5px;line-height:12.5px;letter-spacing:-0.757px;color:#fff;">Slide Show</div>
<div class="t" style="left:524.00px;top:42.38px;font-size:12.5px;line-height:12.5px;letter-spacing:-0.832px;color:#fff;">Review</div>
<div class="t" style="left:590.50px;top:42.38px;font-size:12.5px;line-height:12.5px;letter-spacing:-0.780px;color:#fff;">View</div>
<div class="t" style="left:644.60px;top:42.38px;font-size:12.5px;line-height:12.5px;letter-spacing:-0.395px;color:#fff;">Mix</div>
<div class="t" style="left:692.60px;top:42.38px;font-size:12.5px;line-height:12.5px;letter-spacing:-0.625px;color:#fff;">LiveSlides</div>
<div class="t" style="left:790.50px;top:42.38px;font-size:12.5px;line-height:12.5px;letter-spacing:-0.249px;color:#fff;">Tell me...</div>
<div class="t" style="left:894.50px;top:42.38px;font-size:12.5px;line-height:12.5px;letter-spacing:-0.480px;color:#fff;">Farshad Iqbal</div>
<div class="t" style="left:1001.00px;top:42.38px;font-size:12.5px;line-height:12.5px;letter-spacing:-1.101px;color:#fff;">Share</div>
<div class="t" style="left:14.40px;top:102.80px;font-size:12px;line-height:12px;letter-spacing:-0.370px;color:#444;">New</div>
<div class="t" style="left:9.40px;top:118.60px;font-size:12px;line-height:12px;letter-spacing:-0.652px;color:#444;">Slide</div>
<div class="t" style="left:11.20px;top:137.70px;font-size:12px;line-height:12px;letter-spacing:-0.657px;color:#666;">Slides</div>
<div class="t" style="left:62.20px;top:102.80px;font-size:12px;line-height:12px;letter-spacing:-0.053px;color:#444;">Table</div>
<div class="t" style="left:61.20px;top:137.70px;font-size:12px;line-height:12px;letter-spacing:-0.697px;color:#666;">Tables</div>
<div class="t" style="left:109.40px;top:102.80px;font-size:12px;line-height:12px;letter-spacing:-0.278px;color:#444;">Pictures</div>
<div class="t" style="left:176.80px;top:68.60px;font-size:12px;line-height:12px;letter-spacing:-0.184px;color:#444;">Online Pictures</div>
<div class="t" style="left:176.80px;top:91.60px;font-size:12px;line-height:12px;letter-spacing:-0.463px;color:#444;">Screenshot</div>
<div class="t" style="left:176.80px;top:114.60px;font-size:12px;line-height:12px;letter-spacing:0.089px;color:#444;">Photo Album</div>
<div class="t" style="left:168.00px;top:137.70px;font-size:12px;line-height:12px;letter-spacing:-0.590px;color:#666;">Images</div>
<div class="t" style="left:298.50px;top:68.60px;font-size:12px;line-height:12px;letter-spacing:-0.880px;color:#444;">Shapes</div>
<div class="t" style="left:298.50px;top:91.20px;font-size:12px;line-height:12px;letter-spacing:-0.215px;color:#444;">SmartArt</div>
<div class="t" style="left:298.50px;top:114.40px;font-size:12px;line-height:12px;letter-spacing:-0.452px;color:#444;">Chart</div>
<div class="t" style="left:282.40px;top:137.70px;font-size:12px;line-height:12px;letter-spacing:0.042px;color:#666;">Illustrations</div>
<div class="t" style="left:365.40px;top:100.50px;font-size:12px;line-height:12px;letter-spacing:0.216px;color:#444;">Add-</div>
<div class="t" style="left:367.40px;top:116.70px;font-size:12px;line-height:12px;letter-spacing:-0.470px;color:#444;">ins</div>
<div class="t" style="left:407.20px;top:102.80px;font-size:12px;line-height:12px;letter-spacing:-0.027px;color:#A6A6A6;">Hyperlink</div>
<div class="t" style="left:464.00px;top:102.80px;font-size:12px;line-height:12px;letter-spacing:0.384px;color:#A6A6A6;">Action</div>
<div class="t" style="left:441.50px;top:137.70px;font-size:12px;line-height:12px;letter-spacing:-0.753px;color:#666;">Links</div>
<div class="t" style="left:514.30px;top:102.80px;font-size:12px;line-height:12px;letter-spacing:0.170px;color:#444;">Comment</div>
<div class="t" style="left:514.30px;top:137.70px;font-size:12px;line-height:12px;letter-spacing:-0.688px;color:#666;">Comments</div>
<div class="t" style="left:590.40px;top:102.40px;font-size:12px;line-height:12px;letter-spacing:-0.425px;color:#444;">Text</div>
<div class="t" style="left:591.70px;top:118.50px;font-size:12px;line-height:12px;letter-spacing:-1.189px;color:#444;">Box</div>
<div class="t" style="left:629.40px;top:102.40px;font-size:12px;line-height:12px;letter-spacing:-0.352px;color:#444;">Header</div>
<div class="t" style="left:624.40px;top:118.50px;font-size:12px;line-height:12px;letter-spacing:0.082px;color:#444;">&amp; Footer</div>
<div class="t" style="left:676.40px;top:102.40px;font-size:12px;line-height:12px;letter-spacing:0.008px;color:#444;">WordArt</div>
<div class="t" style="left:653.00px;top:137.70px;font-size:12px;line-height:12px;letter-spacing:-0.991px;color:#666;">Text</div>
<div class="t" style="left:754.40px;top:100.30px;font-size:12px;line-height:12px;letter-spacing:-0.269px;color:#444;">Symbols</div>
<div class="t" style="left:813.20px;top:102.80px;font-size:12px;line-height:12px;letter-spacing:-0.350px;color:#444;">Video</div>
<div class="t" style="left:854.30px;top:102.80px;font-size:12px;line-height:12px;letter-spacing:0.046px;color:#444;">Audio</div>
<div class="t" style="left:903.70px;top:102.80px;font-size:12px;line-height:12px;letter-spacing:-0.710px;color:#444;">Screen</div>
<div class="t" style="left:893.40px;top:118.60px;font-size:12px;line-height:12px;letter-spacing:-0.140px;color:#444;">Recording</div>
<div class="t" style="left:862.50px;top:137.70px;font-size:12px;line-height:12px;letter-spacing:-0.527px;color:#666;">Media</div>
<div class="t" style="left:295.80px;top:358.62px;font-size:29.5px;line-height:29.5px;letter-spacing:0.687px;color:#111;-webkit-text-stroke:0.7px #fff;">Click to add title</div>
<div class="t" style="left:352.00px;top:401.75px;font-size:13px;line-height:13px;letter-spacing:-0.230px;color:#1a1a1a;">Click to add subtitle</div>
<div class="t" style="left:718.40px;top:169.47px;font-size:20.5px;line-height:20.5px;letter-spacing:-0.561px;color:#D24726;-webkit-text-stroke:0.35px #E6E6E6;">YAY Images</div>
<div class="t" style="left:734.40px;top:209.95px;font-size:15px;line-height:15px;letter-spacing:-0.397px;color:#3DB5E6;">Search</div>
<div class="t" style="left:852.30px;top:209.95px;font-size:15px;line-height:15px;letter-spacing:0.385px;color:#555;">Login</div>
<div class="t" style="left:948.50px;top:210.25px;font-size:15px;line-height:15px;letter-spacing:0.062px;color:#555;">Visit Site</div>
<div class="t" style="left:745.00px;top:264.15px;font-size:13px;line-height:13px;letter-spacing:-0.802px;color:#555;">SEARCH FOR IMAGES...</div>
<div class="t" style="left:739.20px;top:318.95px;font-size:13px;line-height:13px;letter-spacing:-0.292px;color:#BDBDBD;">Search Filters:</div>
<div class="t" style="left:828.80px;top:334.70px;font-size:12px;line-height:12px;letter-spacing:-0.318px;color:#BDBDBD;">People</div>
<div class="t" style="left:878.90px;top:335.20px;font-size:12px;line-height:12px;letter-spacing:-0.407px;color:#BDBDBD;">TextSpace</div>
<div class="t" style="left:947.40px;top:334.10px;font-size:12px;line-height:12px;letter-spacing:-0.853px;color:#BDBDBD;">Reset</div>
<div class="t" style="left:8.40px;top:642.65px;font-size:11px;line-height:11px;letter-spacing:0.062px;color:#444;">Slide 1 of 1</div>
<div class="t" style="left:554.50px;top:642.65px;font-size:11px;line-height:11px;letter-spacing:-0.059px;color:#444;">Notes</div>
<div class="t" style="left:621.80px;top:642.65px;font-size:11px;line-height:11px;letter-spacing:-0.140px;color:#444;">Comments</div>
<div class="t" style="left:987.70px;top:642.65px;font-size:11px;line-height:11px;letter-spacing:-0.668px;color:#444;">43%</div>
</body></html>
